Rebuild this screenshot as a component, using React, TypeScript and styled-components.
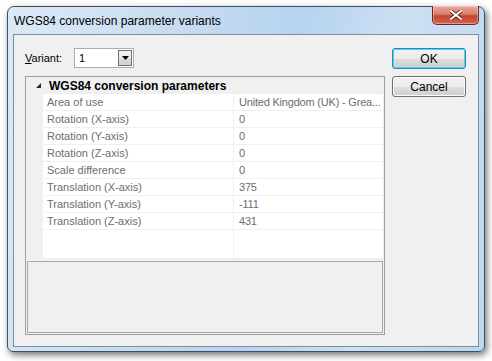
import styled, { createGlobalStyle } from 'styled-components';

const GlobalStyle = createGlobalStyle`
  html, body {
    margin: 0;
    padding: 0;
    background: #ffffff;
  }
  body {
    font-family: "Liberation Sans", Arial, sans-serif;
    font-size: 11px;
  }
`;

const Page = styled.div`
  width: 492px;
  height: 361px;
  padding: 6px 0 0 7px;
  box-sizing: border-box;
`;

const Window = styled.div`
  position: relative;
  width: 478px;
  height: 346px;
  box-sizing: border-box;
  border: 1px solid #414e5c;
  border-radius: 7px 7px 6px 6px;
  background: linear-gradient(100deg, #dce9f6 0%, #c9ddf1 30%, #b6d3ef 55%, #cde0f3 75%, #bcd7f1 100%);
  box-shadow: 2px 3px 7px rgba(0, 0, 0, 0.55);
  display: flex;
  flex-direction: column;
  padding: 0 5px 4px 5px;
`;

const TitleBar = styled.div`
  height: 27px;
  display: flex;
  align-items: center;
  flex-shrink: 0;
`;

const Title = styled.div`
  font-family: "Liberation Sans", Arial, sans-serif;
  font-size: 12px;
  color: #000;
  padding-left: 1px;
  padding-top: 1px;
  flex: 1;
`;

const CloseButton = styled.div`
  position: absolute;
  top: -1px;
  right: 5px;
  width: 47px;
  height: 19px;
  box-sizing: border-box;
  border: 1px solid #6b2a22;
  border-top: none;
  border-radius: 0 0 5px 5px;
  background: linear-gradient(#e9a99c 0%, #d97e6d 45%, #c5452f 55%, #d0664f 100%);
  box-shadow: inset 0 0 0 1px rgba(255, 255, 255, 0.35);
  display: flex;
  align-items: center;
  justify-content: center;
`;

const Client = styled.div`
  flex: 1;
  border: 1px solid #7b8ea3;
  background: #f0f0f0;
  display: flex;
  padding: 13px 12px 12px 11px;
  gap: 7px;
  min-height: 0;
`;

const LeftColumn = styled.div`
  width: 361px;
  display: flex;
  flex-direction: column;
  gap: 8px;
`;

const VariantRow = styled.div`
  height: 20px;
  display: flex;
  align-items: center;
  gap: 12px;
`;

const Label = styled.span`
  color: #000;
  font-size: 11px;
  width: 37px;
`;

const Combo = styled.div`
  width: 60px;
  height: 20px;
  box-sizing: border-box;
  border: 1px solid #abadb3;
  background: #fff;
  display: flex;
  align-items: center;
  justify-content: space-between;
  padding: 1px 1px 1px 4px;
`;

const ComboText = styled.span`
  font-size: 11px;
  color: #000;
`;

const DropButton = styled.div`
  width: 14px;
  height: 16px;
  box-sizing: border-box;
  border: 1px solid #707070;
  background: linear-gradient(#f2f2f2 0%, #ebebeb 50%, #dddddd 51%, #cfcfcf 100%);
  display: flex;
  align-items: center;
  justify-content: center;
`;

const PropertyGrid = styled.div`
  flex: 1;
  box-sizing: border-box;
  border: 1px solid #a0a0a0;
  background: #f0f0f0;
  display: flex;
  flex-direction: column;
`;

const GridArea = styled.div`
  height: 181px;
  background: #fff;
  display: flex;
  flex-direction: column;
  margin-right: 1px;
`;

const CategoryRow = styled.div`
  height: 17px;
  background: #f0f0f0;
  display: flex;
  align-items: center;
  flex-shrink: 0;
`;

const Glyph = styled.div`
  width: 22px;
  display: flex;
  justify-content: center;
  padding-left: 1px;
`;

const CategoryText = styled.span`
  font-weight: bold;
  font-size: 12px;
  color: #000;
`;

const Row = styled.div<{ $fill?: boolean }>`
  display: flex;
  height: ${({ $fill }) => ($fill ? 'auto' : '17px')};
  flex: ${({ $fill }) => ($fill ? 1 : 'none')};
  box-sizing: border-box;
  border-bottom: ${({ $fill }) => ($fill ? 'none' : '1px solid #f0f0f0')};
`;

const Margin = styled.div`
  width: 17px;
  background: #f0f0f0;
  flex-shrink: 0;
`;

const NameCell = styled.div`
  width: 191px;
  box-sizing: border-box;
  padding-left: 4px;
  border-right: 1px solid #f0f0f0;
  display: flex;
  align-items: center;
  color: #6d6d6d;
  white-space: nowrap;
  overflow: hidden;
  flex-shrink: 0;
`;

const ValueCell = styled.div`
  flex: 1;
  min-width: 0;
  padding-left: 5px;
  display: flex;
  align-items: center;
  color: #6d6d6d;
  white-space: nowrap;
  letter-spacing: -0.2px;
`;

const Description = styled.div`
  height: 72px;
  margin: 3px 1px 1px 1px;
  border: 1px solid #a9a9a9;
  background: #f0f0f0;
  box-sizing: border-box;
`;

const ButtonColumn = styled.div`
  display: flex;
  flex-direction: column;
  gap: 7px;
`;

const Button = styled.div<{ $default?: boolean }>`
  width: 74px;
  height: 21px;
  box-sizing: border-box;
  border: 1px solid ${({ $default }) => ($default ? '#3c7fb1' : '#707070')};
  border-radius: 3px;
  background: linear-gradient(#f2f2f2 0%, #ebebeb 50%, #dddddd 51%, #cfcfcf 100%);
  box-shadow: ${({ $default }) =>
    $default ? 'inset 0 0 0 1px #48d8fb' : 'inset 0 0 0 1px #fcfcfc'};
  display: flex;
  align-items: center;
  justify-content: center;
  font-size: 12px;
  color: #000;
`;

const params = [
  { name: 'Area of use', value: 'United Kingdom (UK) - Grea...' },
  { name: 'Rotation (X-axis)', value: '0' },
  { name: 'Rotation (Y-axis)', value: '0' },
  { name: 'Rotation (Z-axis)', value: '0' },
  { name: 'Scale difference', value: '0' },
  { name: 'Translation (X-axis)', value: '375' },
  { name: 'Translation (Y-axis)', value: '-111' },
  { name: 'Translation (Z-axis)', value: '431' },
];

export default function App() {
  return (
    <Page>
      <GlobalStyle />
      <Window>
        <TitleBar>
          <Title>WGS84 conversion parameter variants</Title>
        </TitleBar>
        <CloseButton>
          <svg width="12" height="10" viewBox="0 0 12 10">
            <path
              d="M1 1 L11 9 M11 1 L1 9"
              stroke="#4a1810"
              strokeWidth="3.6"
              strokeLinecap="square"
            />
            <path
              d="M1 1 L11 9 M11 1 L1 9"
              stroke="#ffffff"
              strokeWidth="2"
              strokeLinecap="square"
            />
          </svg>
        </CloseButton>
        <Client>
          <LeftColumn>
            <VariantRow>
              <Label>
                <u>V</u>ariant:
              </Label>
              <Combo>
                <ComboText>1</ComboText>
                <DropButton>
                  <svg width="7" height="4" viewBox="0 0 7 4">
                    <path d="M0 0 H7 L3.5 4 Z" fill="#000" />
                  </svg>
                </DropButton>
              </Combo>
            </VariantRow>
            <PropertyGrid>
              <GridArea>
                <CategoryRow>
                  <Glyph>
                    <svg width="5" height="5" viewBox="0 0 5 5">
                      <path d="M5 0 V5 H0 Z" fill="#262626" />
                    </svg>
                  </Glyph>
                  <CategoryText>WGS84 conversion parameters</CategoryText>
                </CategoryRow>
                {params.map((p) => (
                  <Row key={p.name}>
                    <Margin />
                    <NameCell>{p.name}</NameCell>
                    <ValueCell>{p.value}</ValueCell>
                  </Row>
                ))}
                <Row $fill>
                  <Margin />
                  <NameCell />
                  <ValueCell />
                </Row>
              </GridArea>
              <Description />
            </PropertyGrid>
          </LeftColumn>
          <ButtonColumn>
            <Button $default>OK</Button>
            <Button>Cancel</Button>
          </ButtonColumn>
        </Client>
      </Window>
    </Page>
  );
}
